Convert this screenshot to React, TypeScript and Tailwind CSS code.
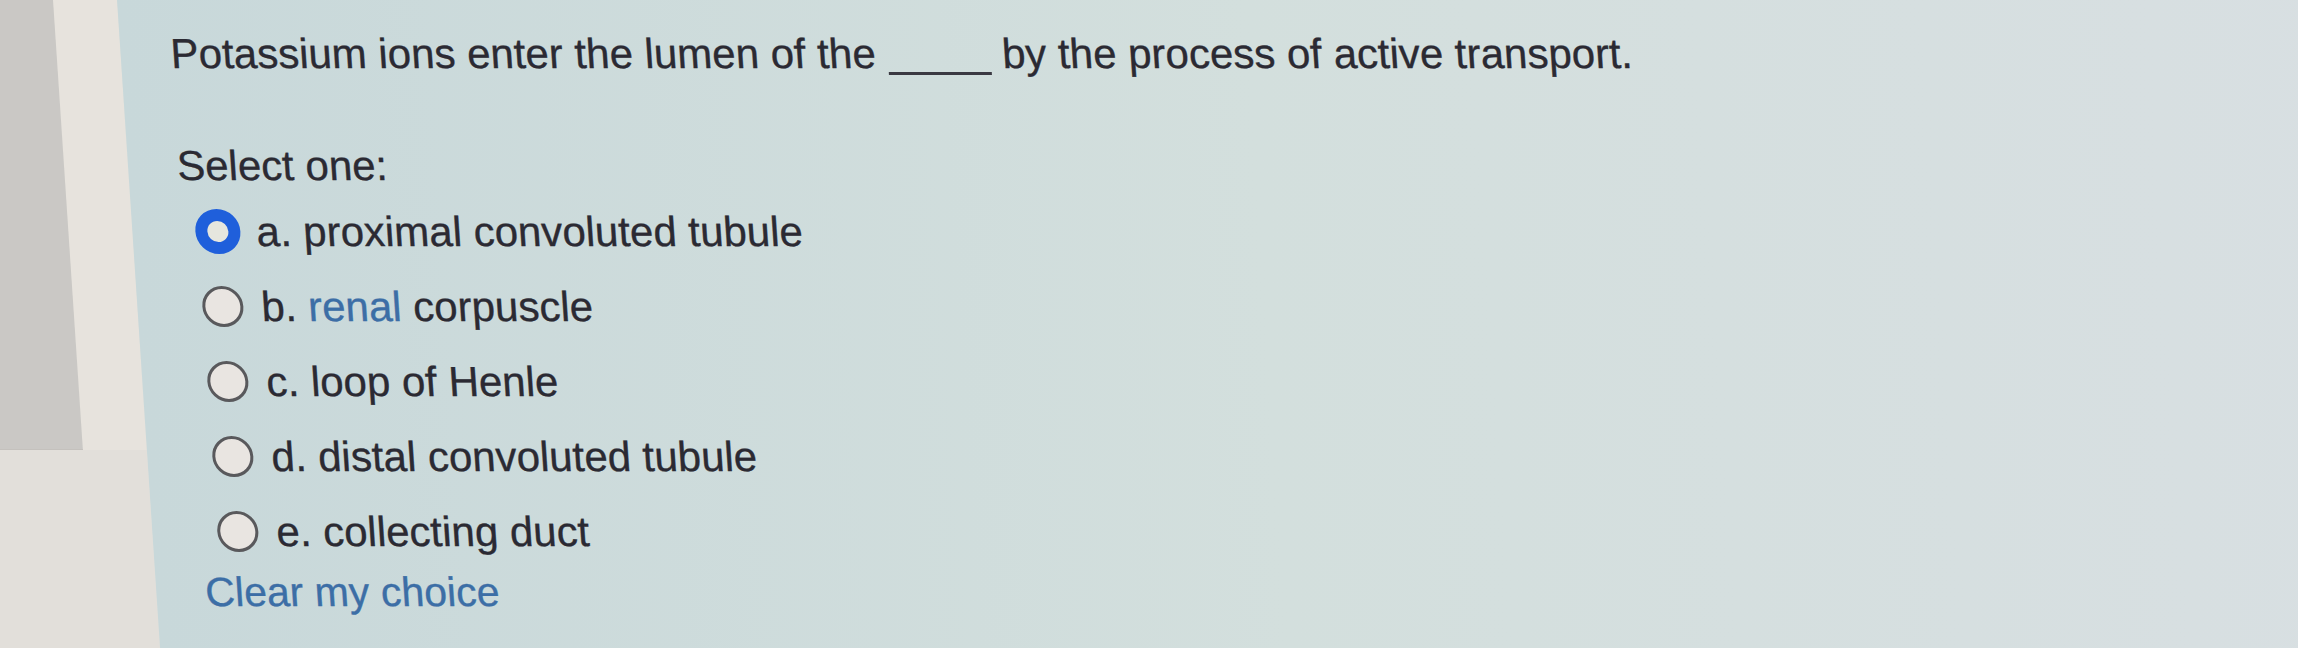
import React from "react";

type Option = { key: string; label: React.ReactNode; selected?: boolean };

const options: Option[] = [
  { key: "a", label: <>a. proximal convoluted tubule</>, selected: true },
  {
    key: "b",
    label: (
      <>
        b. <span className="text-[#3c6ea6]">renal</span> corpuscle
      </>
    ),
  },
  { key: "c", label: <>c. loop of Henle</> },
  { key: "d", label: <>d. distal convoluted tubule</> },
  { key: "e", label: <>e. collecting duct</> },
];

function Radio({ selected }: { selected?: boolean }) {
  if (selected) {
    return (
      <span className="block h-[45px] w-[45px] rounded-full border-[12px] border-[#1f5fdb] bg-[#e6e6de]" />
    );
  }
  return (
    <span className="block h-[41px] w-[41px] rounded-full border-[3px] border-[#59595c] bg-[#e9e5e1]" />
  );
}

export default function App() {
  return (
    <div
      className="h-[648px] w-full overflow-hidden bg-[#e3e0db] text-[#2b2a33] [-webkit-text-stroke:0.35px]"
      style={{ fontFamily: '"Liberation Sans", Arial, Helvetica, sans-serif' }}
    >
      <div className="-ml-[50px] flex h-[648px] w-[2420px] origin-top-left [transform:skewX(3.8deg)]">
        {/* left margin of the page: grey block over a pale strip */}
        <div className="flex w-[167px] shrink-0 flex-col bg-[#e7e3dd]">
          <div className="h-[450px] w-[103px] border-b border-[#c4c1bd] bg-[#cac8c5]" />
          <div className="flex-1 bg-[#e2dfda]" />
        </div>

        {/* question panel */}
        <div className="flex-1 bg-gradient-to-r from-[#c8d8da] via-[#d3dfdd] to-[#d8dfe2] pt-[26px]">
          <p className="pl-[50px] text-[42px] leading-[56px] whitespace-nowrap">
            Potassium ions enter the lumen of the{" "}
            <span className="inline-block w-[103px] translate-y-[7px] border-b-[3px] border-[#3a3942] align-baseline" />{" "}
            by the process of active transport.
          </p>

          <p className="mt-[56px] pl-[49px] text-[42px] leading-[56px]">Select one:</p>

          <div className="flex flex-col">
            {options.map((o) => (
              <div key={o.key} className="flex h-[75px] items-center pl-[63px]">
                <span className="flex w-[45px] justify-center">
                  <Radio selected={o.selected} />
                </span>
                <span className="ml-[16px] whitespace-nowrap text-[42px] leading-[75px]">
                  {o.label}
                </span>
              </div>
            ))}
          </div>

          <p className="pl-[49px] text-[41px] leading-[46px] text-[#3c6ea6]">Clear my choice</p>
        </div>
      </div>
    </div>
  );
}
